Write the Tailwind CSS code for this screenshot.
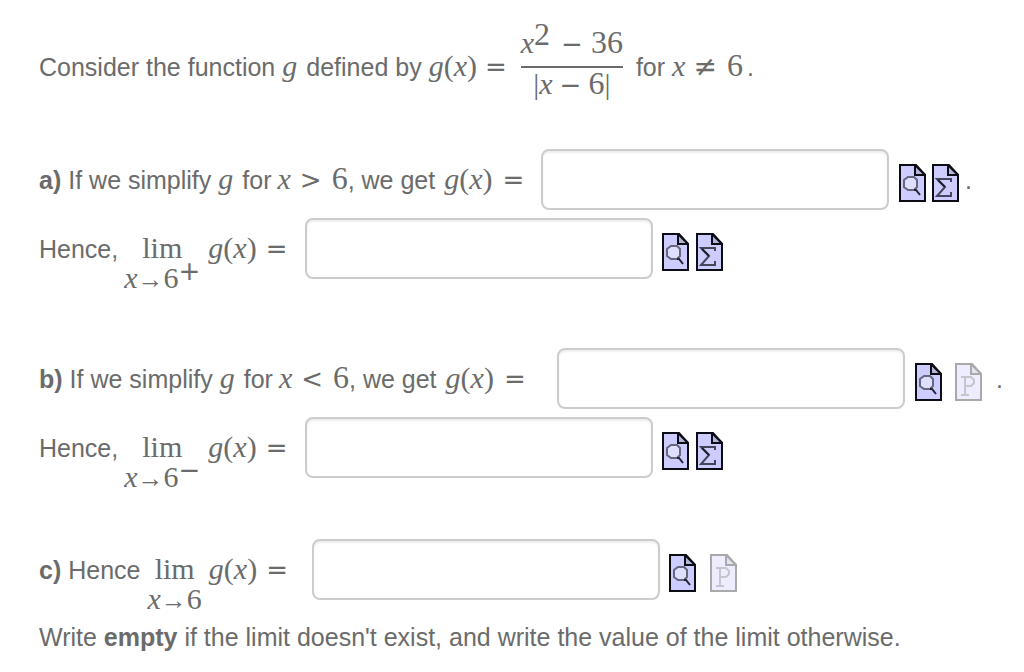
<!DOCTYPE html>
<html lang="en">
<head>
<meta charset="utf-8">
<meta name="viewport" content="width=device-width, initial-scale=1">
<title>Limits of a rational function</title>
<script src="https://cdn.jsdelivr.net/npm/@tailwindcss/browser@4"></script>
</head>
<body class="bg-white font-['Liberation_Sans',Arial,sans-serif] text-[25px] text-[#6b6b6b]">
<svg class="hidden" aria-hidden="true">
  <symbol id="page" viewBox="0 0 27 38">
    <path d="M1 1H17L26 11V37H1Z" fill="#ccccff" stroke="#0c0c14" stroke-width="2"/>
    <path d="M16 1V11H26Z" fill="#b4b4d8" stroke="#0c0c14" stroke-width="2"/>
  </symbol>
  <symbol id="preview" viewBox="0 0 27 38">
    <use href="#page"/>
    <path d="M9 13H15L18 16V23L15 26H9L5 23V16Z" fill="#dedeff" stroke="#66667c" stroke-width="2"/>
    <path d="M15 26H17L21 31" fill="none" stroke="#22222e" stroke-width="2"/>
  </symbol>
  <symbol id="sigma" viewBox="0 0 27 38">
    <use href="#page"/>
    <path d="M19 18V15H5L13 23L5 32H19V28" fill="none" stroke="#45455a" stroke-width="2"/>
    <path d="M6 16L13 23" fill="none" stroke="#20202c" stroke-width="2"/>
  </symbol>
  <symbol id="plot" viewBox="0 0 27 38">
    <use href="#page"/>
    <path d="M6 14H16L19 17V20L16 23H10M10 14V32M6 32H14" fill="none" stroke="#5c5c70" stroke-width="2"/>
  </symbol>
</svg>
<main class="px-[39px] pt-[22px] pb-4">
  <section class="flex items-center whitespace-nowrap">
    <span class="mt-1 flex items-baseline">
      <span>Consider the function</span>
      <i class="ml-[7px] font-['Liberation_Serif',serif] text-[30px]">g</i>
      <span class="ml-[9px]">defined by</span>
      <span class="ml-[7px] font-['Liberation_Serif',serif] text-[30px]"><i>g</i>(<i>x</i>)</span>
      <span class="ml-2 font-['DejaVu_Sans',sans-serif] text-[26px] leading-[30px]">=</span>
    </span>
    <span class="ml-[14px] flex flex-col items-center font-['Liberation_Serif',serif] text-[30px]">
      <span class="flex h-[46px] items-baseline border-b-2 border-[#6b6b6b] leading-[40px]"><i>x</i><sup class="top-0 self-start text-[32px] leading-[24px]">2</sup><span class="ml-[11px] font-['DejaVu_Sans',sans-serif] text-[26px] leading-[30px]">−</span><span class="ml-2 text-[32px]">36</span></span>
      <span class="flex h-[36px] items-baseline leading-[30px]">|<i>x</i><span class="mx-[7px] font-['DejaVu_Sans',sans-serif] text-[26px] leading-[30px]">−</span><span class="text-[32px]">6</span>|</span>
    </span>
    <span class="mt-1 flex items-baseline">
      <span class="ml-[13px]">for</span>
      <i class="ml-[7px] font-['Liberation_Serif',serif] text-[30px]">x</i>
      <span class="ml-2 font-['DejaVu_Sans',sans-serif] text-[28px] leading-[30px]">≠</span>
      <span class="ml-[10px] font-['Liberation_Serif',serif] text-[32px]">6</span><span class="ml-1">.</span>
    </span>
  </section>

  <section class="mt-[45px] flex items-start whitespace-nowrap leading-[62px]">
    <label for="a1" class="flex h-[61px] w-[502px] shrink-0 items-baseline">
      <b>a)</b><span class="ml-[7px]">If we simplify</span>
      <i class="ml-[7px] font-['Liberation_Serif',serif] text-[30px] leading-[40px]">g</i><span class="ml-[9px]">for</span>
      <i class="ml-[6px] font-['Liberation_Serif',serif] text-[30px] leading-[40px]">x</i><span class="ml-[9px] font-['DejaVu_Sans',sans-serif] text-[26px] leading-[30px]">&gt;</span>
      <span class="ml-[10px] font-['Liberation_Serif',serif] text-[32px] leading-[40px]">6</span><span>, we get</span>
      <span class="ml-[9px] font-['Liberation_Serif',serif] text-[30px] leading-[40px]"><i>g</i>(<i>x</i>)</span><span class="ml-[10px] font-['DejaVu_Sans',sans-serif] text-[26px] leading-[30px]">=</span>
    </label>
    <input id="a1" type="text" class="h-[61px] w-[348px] shrink-0 rounded-lg border-2 border-[#cccccc] px-3 shadow-[inset_0_2px_2px_rgba(0,0,0,0.07)]">
    <button type="button" aria-label="Preview" class="ml-[10px] mt-[15px]"><svg class="h-[38px] w-[27px]"><use href="#preview"/></svg></button>
    <button type="button" aria-label="Symbols" class="ml-[6px] mt-[15px]"><svg class="h-[38px] w-[27px]"><use href="#sigma"/></svg></button>
    <span class="ml-[6px]">.</span>
  </section>

  <section class="mt-[7px] flex h-[73px] items-start whitespace-nowrap leading-[62px]">
    <label for="a2" class="flex w-[266px] shrink-0 items-baseline">
      <span>Hence,</span>
      <span class="ml-[6px] flex flex-col items-center font-['Liberation_Serif',serif] text-[30px] leading-[40px]"><span>lim</span><span class="-mt-[5px] flex items-baseline leading-[30px]"><i>x</i><span class="text-[26px]">→</span><span>6</span><sup class="top-0 self-start font-['DejaVu_Sans',sans-serif] text-[26px] leading-[16px]">+</sup></span></span>
      <span class="ml-[8px] font-['Liberation_Serif',serif] text-[30px] leading-[40px]"><i>g</i>(<i>x</i>)</span><span class="ml-[9px] font-['DejaVu_Sans',sans-serif] text-[26px] leading-[30px]">=</span>
    </label>
    <input id="a2" type="text" class="h-[61px] w-[348px] shrink-0 rounded-lg border-2 border-[#cccccc] px-3 shadow-[inset_0_2px_2px_rgba(0,0,0,0.07)]">
    <button type="button" aria-label="Preview" class="ml-[9px] mt-[15px]"><svg class="h-[38px] w-[27px]"><use href="#preview"/></svg></button>
    <button type="button" aria-label="Symbols" class="ml-[7px] mt-[15px]"><svg class="h-[38px] w-[27px]"><use href="#sigma"/></svg></button>
  </section>

  <section class="mt-[57px] flex items-start whitespace-nowrap leading-[62px]">
    <label for="b1" class="flex h-[61px] w-[518px] shrink-0 items-baseline">
      <b>b)</b><span class="ml-[7px]">If we simplify</span>
      <i class="ml-[7px] font-['Liberation_Serif',serif] text-[30px] leading-[40px]">g</i><span class="ml-[9px]">for</span>
      <i class="ml-[6px] font-['Liberation_Serif',serif] text-[30px] leading-[40px]">x</i><span class="ml-[9px] font-['DejaVu_Sans',sans-serif] text-[26px] leading-[30px]">&lt;</span>
      <span class="ml-[10px] font-['Liberation_Serif',serif] text-[32px] leading-[40px]">6</span><span>, we get</span>
      <span class="ml-[9px] font-['Liberation_Serif',serif] text-[30px] leading-[40px]"><i>g</i>(<i>x</i>)</span><span class="ml-[10px] font-['DejaVu_Sans',sans-serif] text-[26px] leading-[30px]">=</span>
    </label>
    <input id="b1" type="text" class="h-[61px] w-[348px] shrink-0 rounded-lg border-2 border-[#cccccc] px-3 shadow-[inset_0_2px_2px_rgba(0,0,0,0.07)]">
    <button type="button" aria-label="Preview" class="ml-[10px] mt-[15px]"><svg class="h-[38px] w-[27px]"><use href="#preview"/></svg></button>
    <button type="button" disabled aria-label="Plot" class="ml-[13px] mt-[15px] opacity-35"><svg class="h-[38px] w-[27px]"><use href="#plot"/></svg></button>
    <span class="ml-[14px]">.</span>
  </section>

  <section class="mt-[7px] flex h-[73px] items-start whitespace-nowrap leading-[62px]">
    <label for="b2" class="flex w-[266px] shrink-0 items-baseline">
      <span>Hence,</span>
      <span class="ml-[6px] flex flex-col items-center font-['Liberation_Serif',serif] text-[30px] leading-[40px]"><span>lim</span><span class="-mt-[5px] flex items-baseline leading-[30px]"><i>x</i><span class="text-[26px]">→</span><span>6</span><sup class="top-0 self-start font-['DejaVu_Sans',sans-serif] text-[26px] leading-[16px]">−</sup></span></span>
      <span class="ml-[8px] font-['Liberation_Serif',serif] text-[30px] leading-[40px]"><i>g</i>(<i>x</i>)</span><span class="ml-[9px] font-['DejaVu_Sans',sans-serif] text-[26px] leading-[30px]">=</span>
    </label>
    <input id="b2" type="text" class="h-[61px] w-[348px] shrink-0 rounded-lg border-2 border-[#cccccc] px-3 shadow-[inset_0_2px_2px_rgba(0,0,0,0.07)]">
    <button type="button" aria-label="Preview" class="ml-[9px] mt-[15px]"><svg class="h-[38px] w-[27px]"><use href="#preview"/></svg></button>
    <button type="button" aria-label="Symbols" class="ml-[7px] mt-[15px]"><svg class="h-[38px] w-[27px]"><use href="#sigma"/></svg></button>
  </section>

  <section class="mt-[49px] flex h-[73px] items-start whitespace-nowrap leading-[62px]">
    <label for="c1" class="flex w-[273px] shrink-0 items-baseline">
      <b>c)</b><span class="ml-[7px]">Hence</span>
      <span class="ml-[7px] flex flex-col items-center font-['Liberation_Serif',serif] text-[30px] leading-[40px]"><span>lim</span><span class="-mt-[5px] flex items-baseline leading-[30px]"><i>x</i><span class="text-[26px]">→</span><span>6</span></span></span>
      <span class="ml-[7px] font-['Liberation_Serif',serif] text-[30px] leading-[40px]"><i>g</i>(<i>x</i>)</span><span class="ml-[9px] font-['DejaVu_Sans',sans-serif] text-[26px] leading-[30px]">=</span>
    </label>
    <input id="c1" type="text" class="h-[61px] w-[348px] shrink-0 rounded-lg border-2 border-[#cccccc] px-3 shadow-[inset_0_2px_2px_rgba(0,0,0,0.07)]">
    <button type="button" aria-label="Preview" class="ml-[9px] mt-[15px]"><svg class="h-[38px] w-[27px]"><use href="#preview"/></svg></button>
    <button type="button" disabled aria-label="Plot" class="ml-[14px] mt-[15px] opacity-35"><svg class="h-[38px] w-[27px]"><use href="#plot"/></svg></button>
  </section>
  <p class="mt-[7px] leading-[36px]">Write <b>empty</b> if the limit doesn't exist, and write the value of the limit otherwise.</p>
</main>
</body>
</html>
